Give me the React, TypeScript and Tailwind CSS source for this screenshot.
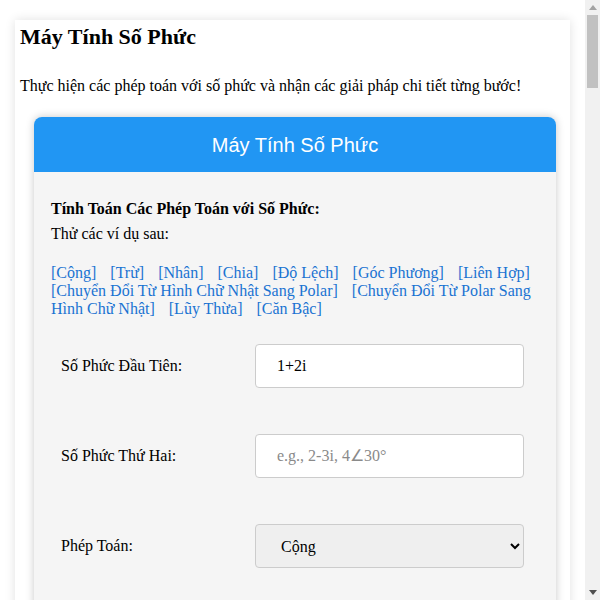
import React from "react";

const links1 = ["[Cộng]", "[Trừ]", "[Nhân]", "[Chia]", "[Độ Lệch]", "[Góc Phương]", "[Liên Hợp]", "[Chuyển Đổi Từ Hình Chữ Nhật Sang Polar]", "[Chuyển Đổi Từ Polar Sang Hình Chữ Nhật]", "[Lũy Thừa]", "[Căn Bậc]"];

function Scrollbar() {
  return (
    <div className="w-[15px] h-[600px] bg-[#f1f1f1] flex flex-col items-center shrink-0">
      <div className="h-[15px] w-full flex items-center justify-center">
        <svg width="8" height="5" viewBox="0 0 8 5">
          <polygon points="4,0 8,5 0,5" fill="#a3a3a3" />
        </svg>
      </div>
      <div className="w-[11px] h-[73px] bg-[#c1c1c1]" />
      <div className="flex-1" />
      <div className="h-[15px] w-full flex items-center justify-center">
        <svg width="8" height="5" viewBox="0 0 8 5">
          <polygon points="0,0 8,0 4,5" fill="#505050" />
        </svg>
      </div>
    </div>
  );
}

export default function App() {
  return (
    <div className="h-[600px] flex overflow-hidden bg-white font-['Liberation_Serif',serif] text-black">
      <div className="flex-1 overflow-hidden">
        <div className="pt-[20px] pb-[20px] px-[15px]">
          <div className="bg-white shadow-[0_0_10px_rgba(0,0,0,0.12)] pt-[4px] px-[5px] pb-[5px]">
            <h1 className="text-[22px] font-bold leading-[26px] m-0">Máy Tính Số Phức</h1>
            <p className="text-[16px] leading-[18px] mt-[27px]">
              Thực hiện các phép toán với số phức và nhận các giải pháp chi tiết từng bước!
            </p>
            <div className="mt-[22px] ml-[14px] mr-[9px] rounded-lg shadow-[0_0_8px_rgba(0,0,0,0.22)] bg-[#f5f5f5] overflow-hidden">
              <div className="bg-[#2196f3] h-[55px] flex items-center justify-center">
                <span className="text-white text-[20px] font-['Liberation_Sans',Arial,sans-serif]">Máy Tính Số Phức</span>
              </div>
              <div className="pl-[17px] pr-[10px] pt-[28px]">
                <div className="text-[16px] font-bold leading-[18px]">Tính Toán Các Phép Toán với Số Phức:</div>
                <div className="text-[16px] leading-[18px] mt-[7px]">Thử các ví dụ sau:</div>
                <div className="text-[16px] leading-[18px] mt-[21px] text-[#1a73d2]">
                  {links1.map((l, i) => (
                    <React.Fragment key={i}>
                      <a href="#" className="mr-[10px] text-[#1a73d2] no-underline">{l}</a>{" "}
                    </React.Fragment>
                  ))}
                </div>
                <div className="mt-[26px] flex flex-col gap-[46px] pl-[10px] pr-[22px]">
                  <div className="flex items-center h-[44px]">
                    <label className="w-[194px] text-[16px]">Số Phức Đầu Tiên:</label>
                    <input
                      className="flex-1 h-[44px] bg-white border border-[#cccccc] rounded-[4px] pl-[21px] text-[16px] font-['Liberation_Serif',serif] outline-none"
                      defaultValue="1+2i"
                    />
                  </div>
                  <div className="flex items-center h-[44px]">
                    <label className="w-[194px] text-[16px]">Số Phức Thứ Hai:</label>
                    <input
                      className="flex-1 h-[44px] bg-white border border-[#cccccc] rounded-[4px] pl-[21px] text-[16px] font-['Liberation_Serif',serif] outline-none placeholder:text-[#8a8a8a]"
                      placeholder="e.g., 2-3i, 4∠30°"
                    />
                  </div>
                  <div className="flex items-center h-[44px]">
                    <label className="w-[194px] text-[16px]">Phép Toán:</label>
                    <select
                      className="flex-1 h-[44px] bg-[#efefef] border border-[#cccccc] rounded-[4px] pl-[21px] pr-[4px] text-[16px] font-['Liberation_Serif',serif] text-black outline-none"
                      defaultValue="add"
                    >
                      <option value="add">Cộng</option>
                      <option value="sub">Trừ</option>
                      <option value="mul">Nhân</option>
                      <option value="div">Chia</option>
                    </select>
                  </div>
                </div>
                <div className="h-[400px]" />
              </div>
            </div>
          </div>
        </div>
      </div>
      <Scrollbar />
    </div>
  );
}
